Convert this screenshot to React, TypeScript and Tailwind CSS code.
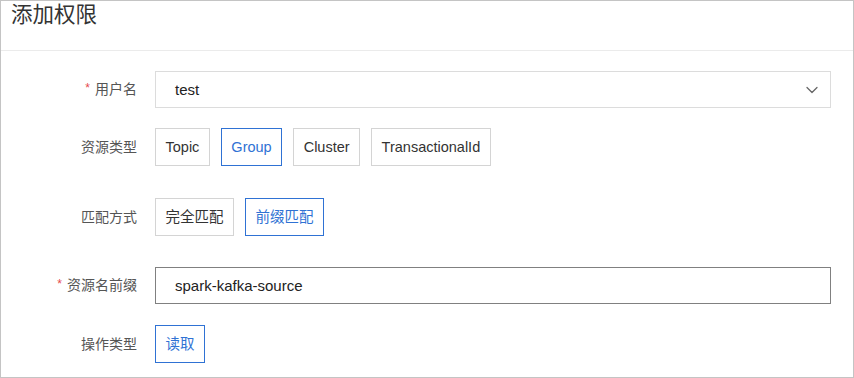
import { ChevronDown } from 'lucide-react';

const font = { fontFamily: '"Liberation Sans", "Noto Sans CJK SC", sans-serif' };

const Label = ({ text, required }: { text: string; required?: boolean }) => (
  <div className="w-[154px] shrink-0 pr-[18px] flex justify-end items-center text-[14px] text-[#555]">
    {required && <span className="text-[#e5484d] text-[12px] mr-[5px] -mt-[4px]">*</span>}
    {text}
  </div>
);

const Choice = ({ text, active }: { text: string; active?: boolean }) => (
  <div
    className={
      'h-[38px] px-[9.5px] pt-[1px] flex items-center border text-[14.5px] ' +
      (active ? 'border-[#2f72d4] text-[#2f72d4]' : 'border-[#d4d4d4] text-[#333]')
    }
  >
    {text}
  </div>
);

export default function App() {
  return (
    <div className="w-[854px] h-[378px] bg-white border border-[#c4c4c4]" style={font}>
      <div className="h-[50px] border-b border-[#ebebeb] px-[10px] pt-[0px] text-[21.5px] leading-[28px] text-[#333]">
        添加权限
      </div>

      <div className="pt-[20px] pr-[22px]">
        <div className="flex h-[37px]">
          <Label text="用户名" required />
          <div className="flex-1 flex items-center justify-between border border-[#dcdcdc] pl-[19px] pr-[8px] pt-[2px] text-[15px] text-[#222]">
            test
            <ChevronDown className="w-[20px] h-[20px] -mt-[2px] text-[#666]" strokeWidth={1.5} />
          </div>
        </div>

        <div className="flex h-[38px] mt-[20px]">
          <Label text="资源类型" />
          <div className="flex gap-[11px]">
            <Choice text="Topic" />
            <Choice text="Group" active />
            <Choice text="Cluster" />
            <Choice text="TransactionalId" />
          </div>
        </div>

        <div className="flex h-[38px] mt-[32px]">
          <Label text="匹配方式" />
          <div className="flex gap-[11px]">
            <Choice text="完全匹配" />
            <Choice text="前缀匹配" active />
          </div>
        </div>

        <div className="flex h-[37px] mt-[31px]">
          <Label text="资源名前缀" required />
          <div className="flex-1 flex items-center border border-[#808080] pl-[19px] pt-[1px] text-[15px] text-[#222]">
            spark-kafka-source
          </div>
        </div>

        <div className="flex h-[38px] mt-[21px]">
          <Label text="操作类型" />
          <Choice text="读取" active />
        </div>
      </div>
    </div>
  );
}
